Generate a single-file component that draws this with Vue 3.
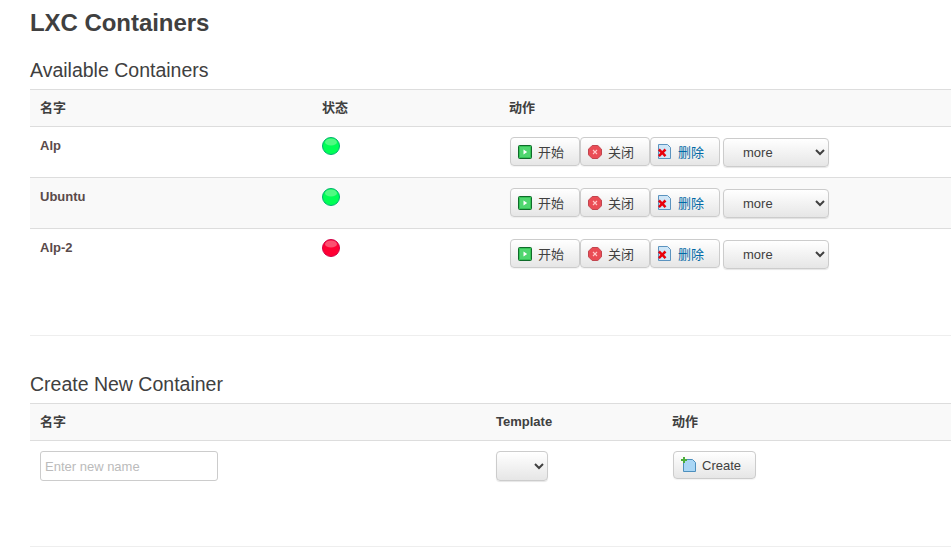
<template>
  <div class="page">
    <h2 class="title">LXC Containers</h2>

    <section class="block first">
      <h3 class="subtitle">Available Containers</h3>
      <table class="grid">
        <colgroup>
          <col style="width: 282px" />
          <col style="width: 187px" />
          <col />
        </colgroup>
        <thead>
          <tr>
            <th><span class="cjk-head">名字</span></th>
            <th><span class="cjk-head">状态</span></th>
            <th><span class="cjk-head">动作</span></th>
          </tr>
        </thead>
        <tbody>
          <tr v-for="(c, i) in containers" :key="c.name" :class="{ odd: i % 2 === 1 }">
            <td class="name">{{ c.name }}</td>
            <td>
              <svg class="led" width="18" height="18" viewBox="0 0 18 18">
                <circle cx="9" cy="9" r="8.5" :fill="c.running ? '#00ff55' : '#ff0033'" :stroke="c.running ? '#00b070' : '#d00048'" stroke-width="1" />
                <ellipse cx="9" cy="5" rx="6" ry="3.6" :fill="c.running ? '#a0f5b0' : '#f8a0b0'" opacity="0.5" />
              </svg>
            </td>
            <td>
              <div class="actions">
                <button class="btn act" type="button">
                  <svg width="14" height="14" viewBox="0 0 14 14">
                    <rect x="0.5" y="0.5" width="13" height="13" rx="1" fill="#35c456" stroke="#0f6b2a" />
                    <rect x="2" y="2" width="10" height="10" fill="#4fd66f" />
                    <path d="M5.5 4.5v5L9.2 7z" fill="#fff" />
                  </svg>
                  <span>开始</span>
                </button>
                <button class="btn act" type="button">
                  <svg width="14" height="14" viewBox="0 0 14 14">
                    <path d="M4.2.5h5.6l3.7 3.7v5.6l-3.7 3.7H4.2L.5 9.8V4.2z" fill="#ea4c55" stroke="#c0454e" />
                    <path d="M5 5l4 4M9 5L5 9" stroke="#ffc8c8" stroke-width="1.1" fill="none" />
                  </svg>
                  <span>关闭</span>
                </button>
                <button class="btn act del" type="button">
                  <svg width="15" height="15" viewBox="0 0 15 15">
                    <path d="M1.5.5h9l3 3v11h-12z" fill="#cfe6f7" stroke="#5b93bf" />
                    <path d="M1 6.4L3.4 8.8 1 11.2 2.8 13l2.4-2.4L7.6 13l1.8-1.8L7 8.8l2.4-2.4L7.6 4.6 5.2 7 2.8 4.6z" fill="#e8000c" />
                  </svg>
                  <span class="blue">删除</span>
                </button>
                <select class="sel more">
                  <option>more</option>
                </select>
              </div>
            </td>
          </tr>
        </tbody>
      </table>
    </section>

    <section class="block second">
      <h3 class="subtitle">Create New Container</h3>
      <table class="grid">
        <colgroup>
          <col style="width: 456px" />
          <col style="width: 176px" />
          <col />
        </colgroup>
        <thead>
          <tr>
            <th><span class="cjk-head">名字</span></th>
            <th><span class="latin-head">Template</span></th>
            <th><span class="cjk-head">动作</span></th>
          </tr>
        </thead>
        <tbody>
          <tr class="new-row">
            <td><input class="field" type="text" placeholder="Enter new name" /></td>
            <td><select class="sel tpl"></select></td>
            <td>
              <button class="btn create" type="button">
                <svg width="16" height="16" viewBox="0 0 16 16">
                  <path d="M2.5 2.5h9l3 3v9h-12z" fill="#a9d6f5" stroke="#4d8fbd" />
                  <path d="M3 0v6M0 3h6" stroke="#4cae3c" stroke-width="2" fill="none" />
                </svg>
                <span>Create</span>
              </button>
            </td>
          </tr>
        </tbody>
      </table>
    </section>
  </div>
</template>

<script setup>
const containers = [
  { name: 'Alp', running: true },
  { name: 'Ubuntu', running: true },
  { name: 'Alp-2', running: false },
]
</script>

<style>
html,
body {
  margin: 0;
  background: #fff;
  overflow: hidden;
}
</style>

<style scoped>
.page {
  padding: 0 0 0 30px;
  font-family: "Liberation Sans", "Noto Sans CJK SC", Arial, sans-serif;
  font-size: 13px;
  color: #404040;
}

.title {
  margin: 0;
  padding-top: 9px;
  font-size: 24px;
  line-height: 27px;
  font-weight: bold;
  color: #404040;
  letter-spacing: -0.05px;
}

.subtitle {
  margin: 0;
  font-size: 19.5px;
  line-height: 24px;
  font-weight: normal;
  color: #404040;
}

.block {
  border-bottom: 1px solid #eee;
}

.first {
  margin-top: 22px;
  height: 277px;
}

.second {
  margin-top: 36px;
  height: 174px;
}

.grid {
  width: 100%;
  margin-top: 7px;
  border-collapse: collapse;
  table-layout: fixed;
  border-top: 1px solid #ddd;
}

.grid th {
  height: 36px;
  padding: 0 10px;
  background: #f9f9f9;
  border-bottom: 1px solid #ddd;
  text-align: left;
  font-size: 13px;
  font-weight: bold;
  color: #404040;
}

.cjk-head {
  position: relative;
  top: -2px;
}

.latin-head {
  position: relative;
  top: -1px;
}

.grid td {
  padding: 10px 10px 0;
  box-sizing: border-box;
  height: 51px;
  vertical-align: top;
  border-bottom: 1px solid #ddd;
}

.grid tr.odd td {
  background: #f9f9f9;
}

.grid tr:last-child td {
  border-bottom: none;
}

.name {
  font-weight: bold;
  line-height: 16px;
  color: #5a4a4a;
}

.grid td.name {
  padding-top: 11px;
}

.led {
  display: block;
}

.actions {
  display: flex;
  align-items: flex-start;
  padding-left: 1px;
}

.btn {
  display: inline-flex;
  align-items: center;
  box-sizing: border-box;
  margin: 0;
  border: 1px solid #ccc;
  border-radius: 4px;
  background: linear-gradient(#fff, #e6e6e6);
  box-shadow: 0 1px 1px rgba(0, 0, 0, 0.05);
  font-family: inherit;
  font-size: 13px;
  color: #404040;
}

.act {
  width: 70px;
  height: 29px;
  padding: 0 0 0 7px;
  gap: 6px;
}

.del {
  gap: 6px;
  padding-left: 6px;
}

.blue {
  color: #0069a6;
}

.sel {
  box-sizing: border-box;
  border: 1px solid #ccc;
  border-radius: 4px;
  background: linear-gradient(#fff, #e6e6e6);
  box-shadow: 0 1px 1px rgba(0, 0, 0, 0.1);
  font-family: inherit;
  font-size: 13px;
  color: #404040;
}

.more {
  width: 106px;
  height: 29px;
  margin: 1px 0 0 3px;
  padding-left: 15px;
}

.tpl {
  display: block;
  width: 52px;
  height: 30px;
}

.field {
  display: block;
  box-sizing: border-box;
  width: 178px;
  height: 30px;
  padding: 0 4px;
  border: 1px solid #ccc;
  border-radius: 3px;
  font-family: inherit;
  font-size: 13px;
  outline: none;
}

.field::placeholder {
  color: #bbb;
}

.create {
  height: 28px;
  width: 83px;
  margin-left: 1px;
  padding: 0 0 0 7px;
  gap: 5px;
}
</style>
